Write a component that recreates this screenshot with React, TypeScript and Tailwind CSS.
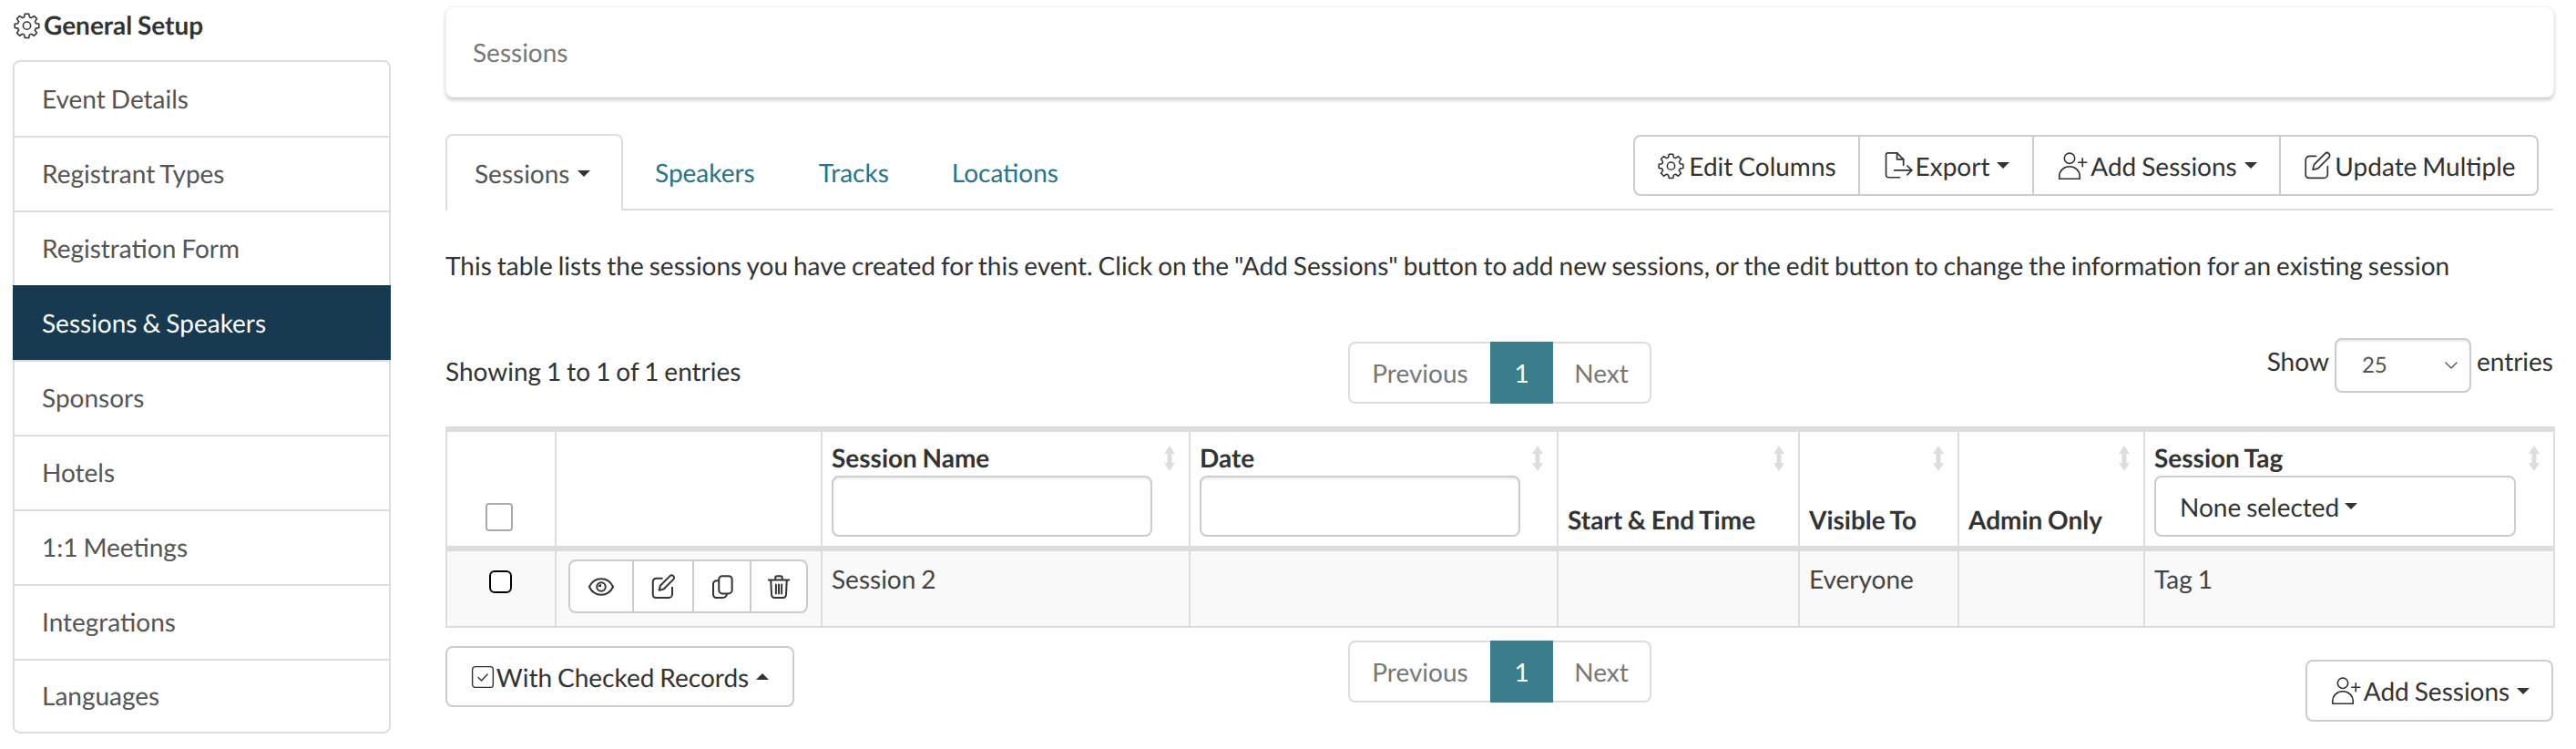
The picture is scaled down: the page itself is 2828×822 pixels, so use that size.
import React from "react";
import { ChevronDown } from "lucide-react";

const Gear = ({ c = "w-[31px] h-[31px]" }: { c?: string }) => (
  <svg viewBox="0 0 24 24" className={c} fill="none" stroke="currentColor" strokeWidth="1.2" strokeLinejoin="round">
    <path d="M10.300 2.500h3.400l.5 2.700 1.600.7 2.300-1.600 2.400 2.400-1.600 2.300.7 1.600 2.700.5v3.200l-2.700.5-.7 1.600 1.600 2.300-2.400 2.400-2.300-1.600-1.600.7-.5 2.700h-3.400l-.5-2.700-1.600-.7-2.300 1.600-2.400-2.400 1.600-2.300-.7-1.600-2.700-.5v-3.200l2.700-.5.7-1.600-1.600-2.300 2.400-2.400 2.300 1.600 1.600-.7z" />
    <circle cx="12" cy="12.500" r="3.200" />
  </svg>
);
const FileOut = () => (
  <svg viewBox="0 0 24 24" className="w-[34px] h-[34px]" fill="none" stroke="currentColor" strokeWidth="1.200" strokeLinecap="round" strokeLinejoin="round">
    <path d="M13 21H4.500A2 2 0 0 1 2.500 19V3.500A1.500 1.500 0 0 1 4 2h7l5 5v4.500" />
    <path d="M11 2v5h5M9 15.500h13.500M19 12l3.500 3.500L19 19" />
  </svg>
);
const UserPlus = () => (
  <svg viewBox="0 0 24 24" className="w-[36px] h-[36px]" fill="none" stroke="currentColor" strokeWidth="1.100" strokeLinecap="round" strokeLinejoin="round">
    <circle cx="10" cy="6.500" r="3.800" />
    <path d="M2.500 21.500v-2a7.500 7 0 0 1 15 0v2zM19.500 6.500v6M16.500 9.500h6" />
  </svg>
);
const PenSq = ({ c = "w-[30px] h-[30px]", w = 1.6 }: { c?: string; w?: number }) => (
  <svg viewBox="0 0 24 24" className={c} fill="none" stroke="currentColor" strokeWidth={w} strokeLinecap="round" strokeLinejoin="round">
    <path d="M11 4.500H6a3 3 0 0 0-3 3V19a2.500 2.500 0 0 0 2.500 2.500H17a3 3 0 0 0 3-3v-6" />
    <path d="M18 2.500a2 2 0 0 1 3 3l-8.500 8.500-4 1 1-4z" />
  </svg>
);
const EyeI = () => (
  <svg viewBox="0 0 24 24" className="w-[30px] h-[30px]" fill="none" stroke="currentColor" strokeWidth="1.600">
    <path d="M1.500 12C4 7 7.500 5 12 5s8 2 10.500 7c-2.500 5-6 7-10.500 7s-8-2-10.500-7z" />
    <circle cx="12" cy="12" r="3.800" />
    <path d="M9.500 12a2.500 2.500 0 0 1 2.500-2.500V12z" fill="currentColor" stroke="none" />
  </svg>
);
const CopyI = () => (
  <svg viewBox="0 0 24 24" className="w-[30px] h-[30px]" fill="none" stroke="currentColor" strokeWidth="1.600" strokeLinejoin="round">
    <rect x="9" y="2.500" width="11.500" height="15.500" rx="3" />
    <path d="M9 6.500H7a3 3 0 0 0-3 3V19a2.500 2.500 0 0 0 2.500 2.500H13a3 3 0 0 0 2.800-3.500" />
  </svg>
);
const TrashI = () => (
  <svg viewBox="0 0 24 24" className="w-[30px] h-[30px]" fill="none" stroke="currentColor" strokeWidth="1.600" strokeLinecap="round" strokeLinejoin="round">
    <path d="M3 6h18M9 6V4a1.500 1.500 0 0 1 1.500-1.500h3A1.500 1.500 0 0 1 15 4v2M5 6l.6 13a2.500 2.500 0 0 0 2.500 2.500h7.800a2.500 2.500 0 0 0 2.500-2.500L19 6M9.500 10v8M12 10v8M14.500 10v8" />
  </svg>
);
const CheckSq = () => (
  <svg viewBox="0 0 24 24" className="w-[26px] h-[26px]" fill="none" stroke="currentColor" strokeWidth="1.300" strokeLinecap="round" strokeLinejoin="round">
    <rect x="1.500" y="1.500" width="21" height="21" rx="3" />
    <path d="m7.500 12.500 3.200 3.200 6-6.500" />
  </svg>
);
const Sort = () => (
  <svg viewBox="0 0 14 28" className="absolute right-[13px] top-[15px] w-[16px] h-[28px] text-[#dddddd]" fill="currentColor">
    <path d="M7 0 13 9H9.500V19H13L7 28 1 19H4.500V9H1z" />
  </svg>
);
const Caret = ({ up = false, c = "ml-[6px]" }: { up?: boolean; c?: string }) => (
  <span className={`inline-block w-0 h-0 ${c} align-middle border-x-[7px] border-x-transparent ${up ? "border-b-[7px] border-b-[#333333]" : "border-t-[7px] border-t-[#333333]"}`} />
);

const nav = ["Event Details", "Registrant Types", "Registration Form", "Sessions & Speakers", "Sponsors", "Hotels", "1:1 Meetings", "Integrations", "Languages"];

const Pager = ({ c }: { c: string }) => (
  <div className={`flex h-[68px] text-[28px] text-[#777777] ${c}`}>
    <span className="flex items-center justify-center w-[156px] bg-white border-2 border-r-0 border-[#dddddd] rounded-l-[8px]">Previous</span>
    <span className="flex items-center justify-center w-[69px] bg-[#3a7d8c] text-white">1</span>
    <span className="flex items-center justify-center w-[108px] bg-white border-2 border-l-0 border-[#dddddd] rounded-r-[8px]">Next</span>
  </div>
);

export default function App() {
  const th = "relative border-l-2 border-[#dddddd] align-bottom p-0";
  const label = "px-[10px] pb-[12px] font-bold text-[28px] leading-[34px] text-[#333333] text-left";
  const topLabel = "px-[10px] pt-[11px] font-bold text-[28px] leading-[34px] text-[#333333] text-left";
  const input = "block mx-[10px] mt-[3px] mb-[10px] h-[67px] bg-white border-2 border-[#cccccc] rounded-[8px] shadow-[inset_0_2px_2px_rgba(0,0,0,0.08)]";
  return (
    <div className="flex w-[2828px] h-[822px] bg-white overflow-hidden font-['Lato','Noto_Sans',sans-serif] text-[#333333] text-[28px] [text-rendering:geometricPrecision] [word-spacing:-1.2px]">
      <aside className="w-[489px] shrink-0 pl-[14px] pr-[60px]">
        <div className="flex items-center h-[54px] font-bold text-[28px] gap-[3px]">
          <Gear />
          <span>General Setup</span>
        </div>
        <ul className="mt-[12px] border-2 border-[#dddddd] rounded-[8px]">
          {nav.map((n, i) => (
            <li
              key={n}
              className={`flex items-center pb-[2px] ${i === 0 ? "h-[81px]" : i === 8 ? "h-[80px]" : "h-[82px]"} px-[30px] ${i > 0 ? "border-t-2" : ""} ${i === 3 ? "bg-[#173a51] border-[#173a51] text-white -mx-[2px] px-[32px]" : "border-[#dddddd] text-[#555555]"}`}
            >
              {n}
            </li>
          ))}
        </ul>
      </aside>
      <main className="w-[2314px] shrink-0">
        <div className="mt-[7px] h-[100px] w-[2315px] flex items-center px-[29px] bg-white rounded-[8px] border border-[#f2f2f2] shadow-[0_3px_4px_rgba(0,0,0,0.2)] text-[#777777]">
          Sessions
        </div>
        <div className="mt-[40px] h-[84px] flex items-start border-b-2 border-[#dddddd] relative">
          <div className="flex items-center h-[84px] w-[195px] px-[30px] border-2 border-b-0 border-[#dddddd] rounded-t-[8px] bg-white text-[#555555]">
            Sessions
            <Caret c="ml-[9px]" />
          </div>
          <span className="h-[84px] flex items-center ml-[35px] text-[#2b7385]">Speakers</span>
          <span className="h-[84px] flex items-center ml-[70px] text-[#2b7385]">Tracks</span>
          <span className="h-[84px] flex items-center ml-[69px] text-[#2b7385]">Locations</span>
          <div className="ml-auto mr-[16px] mt-[1px] flex h-[67px] border-2 border-[#cccccc] rounded-[8px] text-[#333333]">
            <span className="flex items-center justify-center gap-[4px] w-[245px]"><Gear />Edit Columns</span>
            <span className="flex items-center justify-center gap-[2px] w-[191px] border-l-2 border-[#cccccc]"><FileOut />Export<Caret /></span>
            <span className="flex items-center justify-center gap-[2px] w-[271px] border-l-2 border-[#cccccc]"><UserPlus />Add Sessions<Caret /></span>
            <span className="flex items-center justify-center gap-[2px] w-[283px] border-l-2 border-[#cccccc]"><PenSq c="w-[34px] h-[34px]" w={1.2} />Update Multiple</span>
          </div>
        </div>
        <p className="mt-[40px] leading-[40px] whitespace-nowrap">
          This table lists the sessions you have created for this event. Click on the "Add Sessions" button to add new sessions, or the edit button to change the information for an existing session
        </p>
        <div className="mt-[64px] h-[78px] flex items-start w-[2314px]">
          <span className="w-[991px] mt-[12px] leading-[40px]">Showing 1 to 1 of 1 entries</span>
          <Pager c="" />
          <div className="ml-auto flex items-start gap-[6px]">
            <span className="mt-[1px] leading-[40px]">Show</span>
            <span className="flex items-center justify-between w-[150px] h-[60px] pl-[28px] pr-[8px] border-2 border-[#cccccc] rounded-[8px] text-[24px] text-[#555555] -mt-[4px] shadow-[inset_0_2px_2px_rgba(0,0,0,0.08)]">
              25
              <ChevronDown className="w-[24px] h-[24px]" strokeWidth={1.4} />
            </span>
            <span className="mt-[1px] leading-[40px]">entries</span>
          </div>
        </div>
        <table className="mt-[15px] w-[2314px] table-fixed border-collapse border-t-[6px] border-[#dddddd]">
          <colgroup>
            <col className="w-[120px]" />
            <col className="w-[292px]" />
            <col className="w-[404px]" />
            <col className="w-[404px]" />
            <col className="w-[265px]" />
            <col className="w-[175px]" />
            <col className="w-[204px]" />
            <col className="w-[450px]" />
          </colgroup>
          <thead>
            <tr className="h-[126px]">
              <th className={th}>
                <span className="block ml-[42px] mb-[16px] w-[30px] h-[31px] border-2 border-[#aaaaaa] rounded-[4px]" />
              </th>
              <th className={th} />
              <th className={th}>
                <Sort />
                <div className={topLabel}>Session Name</div>
                <div className={`${input} w-[352px]`} />
              </th>
              <th className={th}>
                <Sort />
                <div className={topLabel}>Date</div>
                <div className={`${input} w-[352px]`} />
              </th>
              <th className={th}><Sort /><div className={label}>Start &amp; End Time</div></th>
              <th className={th}><Sort /><div className={label}>Visible To</div></th>
              <th className={th}><Sort /><div className={label}>Admin Only</div></th>
              <th className={`${th} border-r-2`}>
                <Sort />
                <div className={topLabel}>Session Tag</div>
                <div className={`${input} w-[397px] flex items-center px-[26px] font-normal text-[#333333] shadow-none`}>None selected<Caret c="ml-[6px]" /></div>
              </th>
            </tr>
          </thead>
          <tbody>
            <tr className="h-[86px] bg-[#f9f9f9] border-t-[6px] border-b-2 border-[#dddddd]">
              <td className="border-l-2 border-[#dddddd] align-top text-center">
                <span className="block mt-[21px] ml-[46px] w-[25px] h-[25px] border-2 border-black rounded-[6px] bg-white" />
              </td>
              <td className="border-l-2 border-[#dddddd] align-top">
                <div className="flex mt-[9px] ml-[13px] w-[263px] h-[59px] bg-white border-2 border-[#cccccc] rounded-[8px] text-[#333333]">
                  <span className="flex items-center justify-center w-[68px]"><EyeI /></span>
                  <span className="flex items-center justify-center w-[66px] border-l-2 border-[#cccccc]"><PenSq /></span>
                  <span className="flex items-center justify-center w-[63px] border-l-2 border-[#cccccc]"><CopyI /></span>
                  <span className="flex items-center justify-center w-[62px] border-l-2 border-[#cccccc]"><TrashI /></span>
                </div>
              </td>
              <td className="border-l-2 border-[#dddddd] align-top px-[10px] pt-[10px] leading-[40px] text-[#444444]">Session 2</td>
              <td className="border-l-2 border-[#dddddd]" />
              <td className="border-l-2 border-[#dddddd]" />
              <td className="border-l-2 border-[#dddddd] align-top px-[10px] pt-[10px] leading-[40px] text-[#444444]">Everyone</td>
              <td className="border-l-2 border-[#dddddd]" />
              <td className="border-l-2 border-r-2 border-[#dddddd] align-top px-[10px] pt-[10px] leading-[40px] text-[#444444]">Tag 1</td>
            </tr>
          </tbody>
        </table>
        <div className="flex items-start mt-[14px] w-[2314px]">
          <div className="flex items-center justify-center gap-[2px] w-[383px] h-[67px] mt-[6px] border-2 border-[#cccccc] rounded-[8px]">
            <CheckSq />With Checked Records<Caret up />
          </div>
          <Pager c="ml-[608px]" />
          <div className="ml-auto mt-[21px] flex items-center justify-center gap-[2px] w-[272px] h-[68px] border-2 border-[#cccccc] rounded-[8px]">
            <UserPlus />Add Sessions<Caret />
          </div>
        </div>
      </main>
    </div>
  );
}
